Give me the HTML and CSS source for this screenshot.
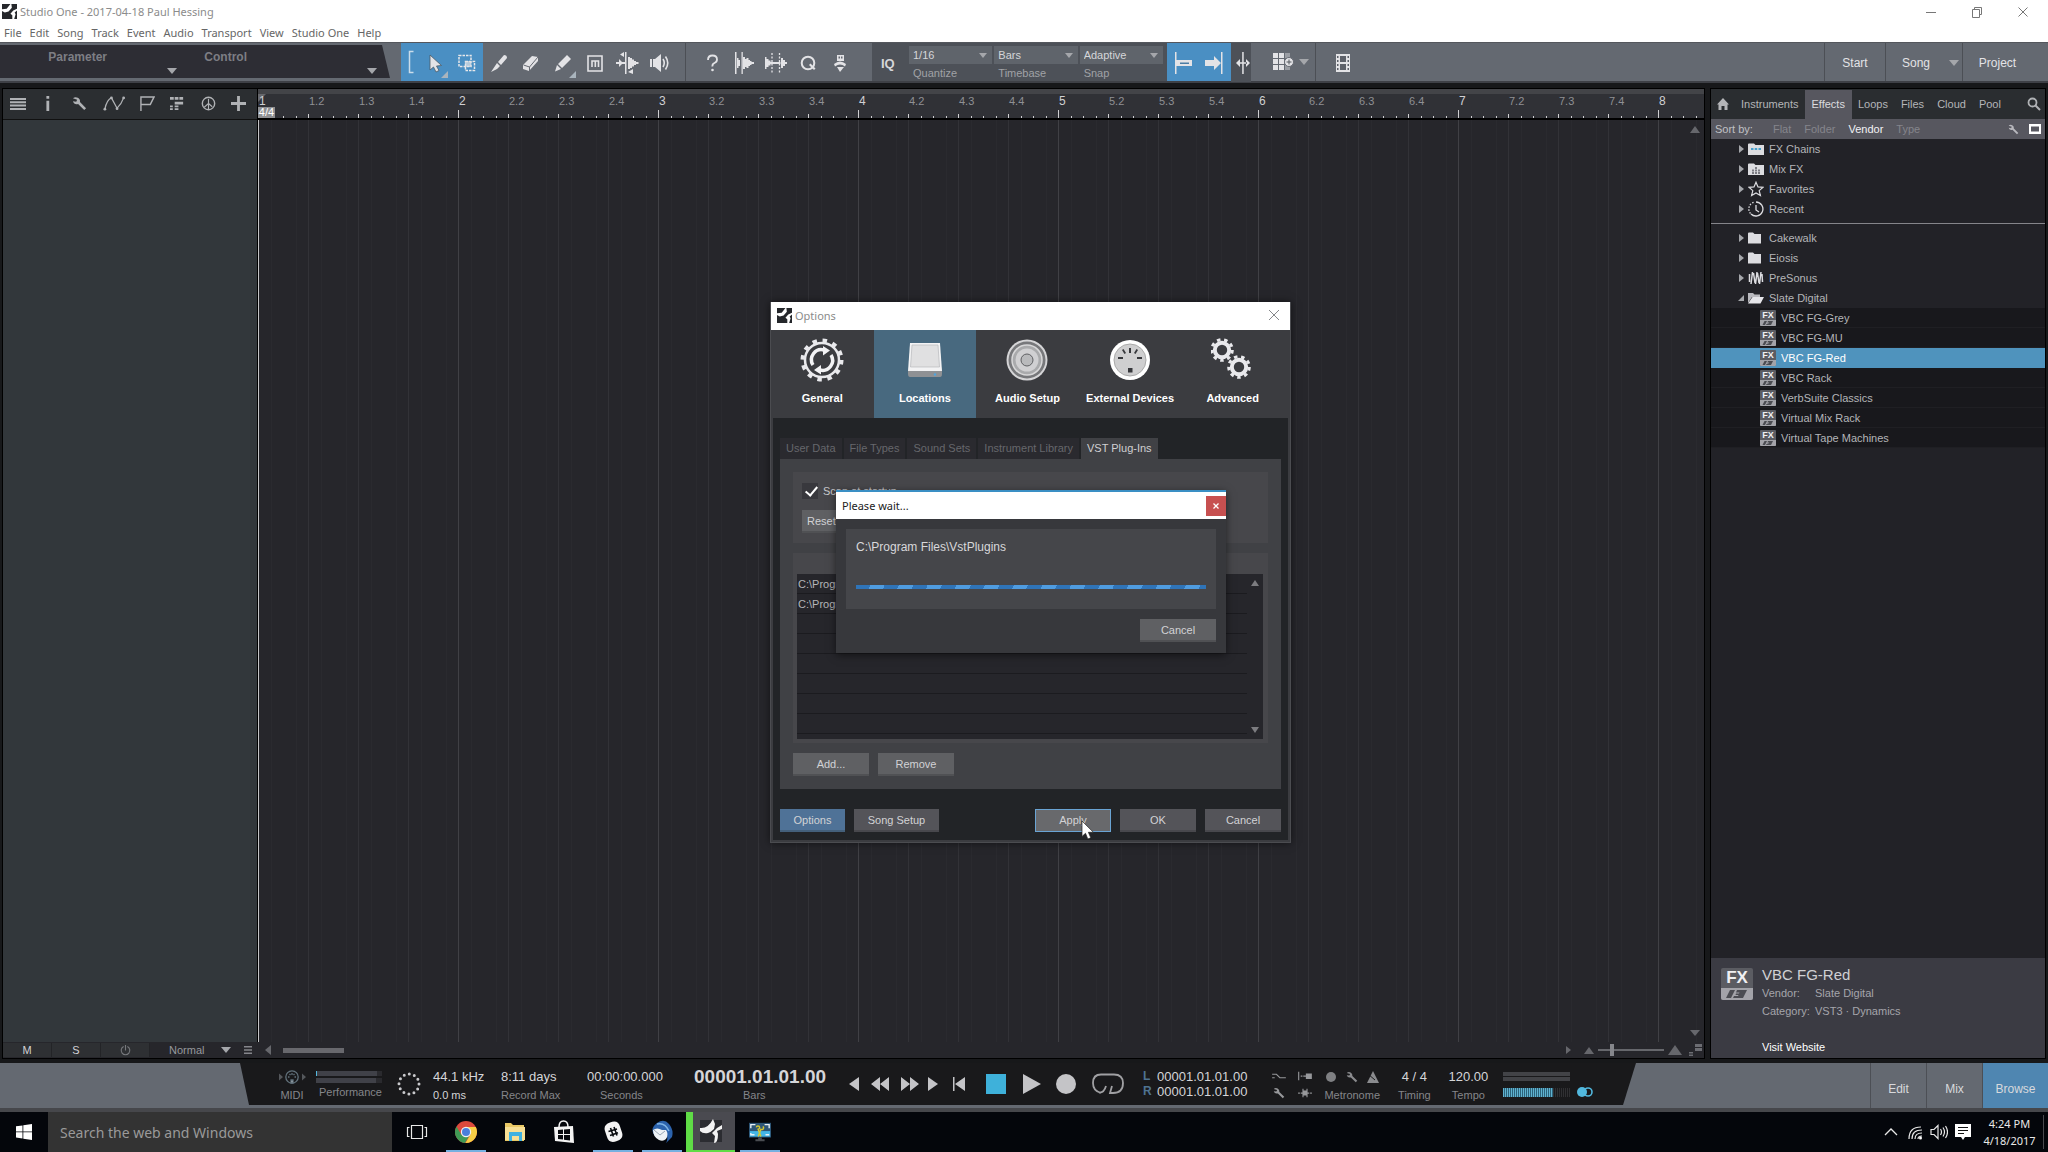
FILE: index.html
```html
<!DOCTYPE html>
<html lang="en">

<head>
    <meta charset="UTF-8">
    <meta name="viewport" content="width=device-width, initial-scale=1.0">
    <title>Studio One - 2017-04-18 Paul Hessing</title>
    <link rel="stylesheet" href="styles.css">
</head>

<body>
    <!-- shared icons -->
    <svg class="defs" aria-hidden="true">
        <symbol id="logo" viewBox="0 0 16 16">
            <rect width="16" height="16" fill="#25272b" />
            <path d="M0 5.500L5 5L9 0H10L10.500 4L7 8L3 9L0 7.500z M16 5L12 7L9 10.500L11 12V16H13L14.500 11L13.500 9L16 7z" fill="#fff" />
        </symbol>
        <symbol id="wrench" viewBox="0 0 16 16">
            <path d="M1 2.500A4.500 4.500 0 0 1 8.500 6.500L15 13L13 15L6.500 8.500A4.500 4.500 0 0 1 1 5.500L4.500 6L5.500 4z" fill="currentColor" />
        </symbol>
        <symbol id="folder" viewBox="0 0 16 12">
            <path d="M0 1.500Q0 .5 1 .5H5L6.500 2H13V11.500H0z" fill="#dcdce0" />
        </symbol>
        <symbol id="plate" viewBox="0 0 32 32">
            <rect width="32" height="32" rx="2" fill="#5b5c62" />
            <path d="M0 20h32v10q0 2-2 2H2q-2 0-2-2z" fill="#a3a3a9" />
            <path d="M9 22h5l-4 8H5z M16 22h10l-4 8H12l1-2h4l.5-1h-3l.5-1.500h3l.5-1H15z" fill="#4b4c52" />
        </symbol>
    </svg>

    <header class="window-head">
        <div class="titlebar">
            <svg class="app-logo"><use href="#logo" /></svg>
            <span>Studio One - 2017-04-18 Paul Hessing</span>
            <div class="win-btns">
                <button type="button" aria-label="Minimize"><svg width="12" height="12"><path d="M1 6.500h10" /></svg></button>
                <button type="button" aria-label="Restore"><svg width="12" height="12"><path d="M1.500 3.500h7v8h-7z M3.500 3v-1.500h7v7h-1.500" /></svg></button>
                <button type="button" aria-label="Close"><svg width="12" height="12"><path d="M1.500 1.500l9 9M10.500 1.500l-9 9" /></svg></button>
            </div>
        </div>
        <nav class="menu">
            <a href="#">File</a><a href="#">Edit</a><a href="#">Song</a><a href="#">Track</a><a href="#">Event</a><a href="#">Audio</a><a href="#">Transport</a><a href="#">View</a><a href="#">Studio One</a><a href="#">Help</a>
        </nav>
    </header>

    <div class="toolbar">
        <div class="param-box">
            <div class="param"><b>Parameter</b><i class="tri"></i></div>
            <div class="param"><b>Control</b><i class="tri"></i></div>
        </div>
        <div class="tools">
            <div class="tool-on">
                <svg class="bracket" viewBox="0 0 6 24"><path d="M5.500 1.500h-4v21h4" fill="none" stroke="#c9dcea" stroke-width="1.500" /></svg>
                <button type="button" class="tool has-more" aria-label="Arrow"><svg viewBox="0 0 24 24"><path d="M7 4v15l3.500-3 2.500 5 3-1.500-2.500-4.500 5-.5z" stroke="#4d5a66" stroke-width=".8" /></svg></button>
                <button type="button" class="tool" aria-label="Range"><svg viewBox="0 0 24 24"><path d="M4 4.500h12v11h-12z M10.500 10.500h9v9h-9z" fill="none" stroke="#e8e8ea" stroke-width="1.500" stroke-dasharray="2.500 1" /><path d="M10 10h6v6h-6z" opacity=".7" /></svg></button>
            </div>
            <button type="button" class="tool" aria-label="Split"><svg viewBox="0 0 24 24"><path d="M17 4q3 0 3 3l-6 7-3-3z M10 12l3 3-3 3-6 3z" /></svg></button>
            <button type="button" class="tool" aria-label="Eraser"><svg viewBox="0 0 24 24"><path d="M4 14l9-9 6 1v4l-9 10-6-2z" /><path d="M4.500 14l6 2 8.500-10M10.500 16v4" fill="none" stroke="#666a72" /></svg></button>
            <button type="button" class="tool has-more" aria-label="Paint"><svg viewBox="0 0 24 24"><path d="M16 4l4 4-9 9-4-4z M6 14l4 4-6 2.500z" /></svg></button>
            <button type="button" class="tool" aria-label="Mute"><svg viewBox="0 0 24 24"><path d="M5 5h14v15H5z M9 16v-6h6.500v6M12.300 10v6" fill="none" stroke="#e3e3e6" stroke-width="1.600" /></svg></button>
            <button type="button" class="tool" aria-label="Bend"><svg viewBox="0 0 24 24"><path d="M10 1h1.500v22H10z M1 11h9v2H1z M4 8l4 4-4 4z M5 3.500L9 1v5z M13 21l5-3v5z M13 6h2v12h-2z M15 7h2v10h-2z M17 8.500h2v7h-2z M19 10h2v4h-2z M21 11h2.500v2H21z" /></svg></button>
            <button type="button" class="tool" aria-label="Listen"><svg viewBox="0 0 24 24"><path d="M3 8h2v8H3z M6 8h2l6-5v18l-6-5H6z" /><path d="M16 8q2.500 4 0 8M18.500 5.500q4.500 6.500 0 13" fill="none" stroke="#e3e3e6" stroke-width="1.600" /></svg></button>
        </div>
        <div class="tools tools-2">
            <button type="button" class="tool" aria-label="Help"><svg viewBox="0 0 24 24"><path d="M8 9q0-4.500 4.500-4.500t4.500 4q0 2.500-2.500 3.500t-2 3.500" fill="none" stroke="#e3e3e6" stroke-width="1.800" /><circle cx="12.500" cy="19" r="1.300" /></svg></button>
            <button type="button" class="tool" aria-label="Strip silence"><svg viewBox="0 0 24 24"><path d="M3 1h1.500v22H3z M9.500 1h1.300v22H9.500z M5 7h1.500v10H5z M6.500 9h1.500v6H6.500z M11 6h2v12h-2z M13 8h1.500v8H13z M14.500 7h2v10h-2z M16.500 9h1.500v6h-1.500z M18 10h1.500v4H18z M19.500 11h2.500v2h-2.500z" /></svg></button>
            <button type="button" class="tool" aria-label="Audio bend"><svg viewBox="0 0 24 24"><path d="M1 6h1.500v12H1z M2.500 8h2v8h-2z M4.500 9.500h2v5h-2z M6.500 11h10v2h-10z M17 7h2v10h-2z M19 9h2v6h-2z M21 11h2v2h-2z" /><path d="M8 2v20M15.500 2v20" stroke="#e3e3e6" stroke-width="1.300" stroke-dasharray="2 1.500" /></svg></button>
            <button type="button" class="tool" aria-label="Quantize"><svg viewBox="0 0 24 24"><circle cx="12" cy="12" r="6.300" fill="none" stroke="#e3e3e6" stroke-width="2" /><path d="M13 14l1.500-1.500 5 5-1.500 1.500z" /></svg></button>
            <button type="button" class="tool" aria-label="Macro"><svg viewBox="0 0 24 24"><path d="M9 4h7v6H9z M6 13q6-5 12 0l-1 2.500q-5-4-10 0z M9 16h7l-4 5z" /><path d="M10.500 5.500h1.500v2h-1.500z M13 5.500h1.500v2H13z" fill="#666a72" /></svg></button>
        </div>
        <div class="snap-bar">
            <b class="iq">IQ</b>
            <div class="pick"><span class="pick-box"><select id="quant"><option>1/16</option></select></span><label for="quant">Quantize</label></div>
            <div class="pick"><span class="pick-box"><select id="timebase"><option>Bars</option></select></span><label for="timebase">Timebase</label></div>
            <div class="pick"><span class="pick-box"><select id="snap"><option>Adaptive</option></select></span><label for="snap">Snap</label></div>
        </div>
        <div class="tool-on follow">
            <button type="button" class="tool" aria-label="Snap to grid"><svg viewBox="0 0 24 24"><path d="M4 1h1.500v22H4z M5 9h16v6H5z" /><path d="M9 11.500h9v1.500H9z" fill="#4a7ca4" /></svg></button>
            <button type="button" class="tool" aria-label="Autoscroll"><svg viewBox="0 0 24 24"><path d="M2 9h9V5l7 7-7 7v-4H2z M18 1h1.500v22H18z" /></svg></button>
        </div>
        <button type="button" class="tool cursor-lock" aria-label="Cursor follows"><svg viewBox="0 0 24 24"><path d="M11.200 1h1.500v22h-1.500z M9 8v8l-4-4z M15 8v8l4-4z M8 11.300h8v1.500H8z" /></svg></button>
        <div class="grid-tool">
            <button type="button" class="tool" aria-label="Grid"><svg viewBox="0 0 24 24"><path d="M2 3h5v5H2z M8 3h5v5H8z M2 9h5v5H2z M8 9h5v5H8z M2 15h5v5H2z M8 15h5v5H8z" /><path d="M14 3h5v5h-5z M14 15h5v5h-5z" fill="#9a9da3" /><circle cx="18" cy="12" r="4.500" stroke="#666a72" /><path d="M18 9.500v5M15.500 12h5" stroke="#55585f" /></svg></button>
            <i class="tri"></i>
        </div>
        <button type="button" class="tool film" aria-label="Video"><svg viewBox="0 0 24 24"><path d="M5 3h14v18H5z" /><path d="M9 5h6v6H9z M9 13h6v6H9z M6 5h1.500v2H6z M6 9h1.500v2H6z M6 13h1.500v2H6z M6 17h1.500v2H6z M16.500 5H18v2h-1.500z M16.500 9H18v2h-1.500z M16.500 13H18v2h-1.500z M16.500 17H18v2h-1.500z" fill="#5d6169" /></svg></button>
        <div class="pages">
            <button type="button">Start</button>
            <button type="button" class="song">Song</button>
            <button type="button" class="more" aria-label="Open songs"><i class="tri"></i></button>
            <button type="button" class="project">Project</button>
        </div>
    </div>

    <main class="workspace">
        <section class="arrange">
            <div class="arrange-top">
                <div class="tracks">
                    <div class="track-tools">
                        <svg viewBox="0 0 16 12"><path d="M0 0h16v2H0z M0 3.300h16v2H0z M0 6.600h16v2H0z M0 9.900h16v2H0z" /></svg>
                        <svg viewBox="0 0 6 16"><path d="M1.500 0h3v3h-3z M1.500 5h3v11h-3z" /></svg>
                        <svg viewBox="0 0 16 16"><use href="#wrench" /></svg>
                        <svg viewBox="0 0 24 16"><path d="M2 14Q4 4 9 2L15 13Q20 8 22 2" fill="none" stroke="#b0b2b5" stroke-width="1.300" /><circle cx="2" cy="14" r="1.500" /><circle cx="9" cy="2" r="1.500" /><circle cx="15" cy="13.500" r="1.500" /><circle cx="22" cy="2" r="1.500" /></svg>
                        <svg viewBox="0 0 16 16"><path d="M1 16V1h14l-4 8H1" fill="none" stroke="#b0b2b5" stroke-width="1.500" /></svg>
                        <svg viewBox="0 0 16 16"><path d="M0 1h4v3H0z M5 1h4v3H5z M10 1h4v3h-4z M5 6h9v3H5z M0 10h3v2H0z M5 10h4v2H5z M0 13h3v2H0z M5 13h4v2H5z" /></svg>
                        <svg viewBox="0 0 16 16"><circle cx="8" cy="8" r="6.600" fill="none" stroke="#b0b2b5" stroke-width="1.500" /><path d="M8 3v5l-4.500 4M8 8l4 3.500M8 8v6" fill="none" stroke="#b0b2b5" stroke-width="1.200" /></svg>
                        <svg viewBox="0 0 16 16"><path d="M6.500 0h3v6.500H16v3H9.500V16h-3V9.500H0v-3h6.500z" /></svg>
                    </div>
                    <div class="track-list"></div>
                </div>
                <div class="timeline">
                    <div class="ruler">
                        <div class="ruler-labels"></div>
                        <span class="sign">4/4</span>
                    </div>
                    <div class="grid">
                        <i class="tri up"></i>
                        <i class="tri"></i>
                    </div>
                </div>
            </div>
            <div class="arrange-foot">
                <button type="button" class="ms">M</button>
                <button type="button" class="ms">S</button>
                <button type="button" class="ms" aria-label="Power"><svg viewBox="0 0 12 12"><path d="M4 1.700a4.700 4.700 0 1 0 4 0M6 0v6" fill="none" stroke="#77797d" stroke-width="1.200" /></svg></button>
                <span class="normal">Normal</span>
                <i class="tri"></i>
                <svg class="lines" viewBox="0 0 8 8"><path d="M0 0h8v1.500H0z M0 3.200h8v1.500H0z M0 6.400h8v1.500H0z" fill="#85868b" /></svg>
                <i class="tri left"></i>
                <span class="hscroll"></span>
                <div class="zoomer">
                    <i class="tri right"></i>
                    <i class="tri up"></i>
                    <input type="range" min="0" max="100" value="20" aria-label="Zoom">
                    <i class="tri up big"></i>
                    <svg class="heights" viewBox="0 0 13 12"><path d="M6 0h7v3H6z M6 4h7v3H6z M0 8h4v1.500H0z M0 10.500h4V12H0z" fill="#6b6c72" /></svg>
                </div>
            </div>
        </section>

        <aside class="browser">
            <nav class="browser-tabs">
                <svg class="home" viewBox="0 0 12 12"><path d="M6 0l6 6.500h-1.500V12h-3V8h-3v4h-3V6.500H0z" /></svg>
                <a href="#">Instruments</a><a href="#" class="active">Effects</a><a href="#">Loops</a><a href="#">Files</a><a href="#">Cloud</a><a href="#">Pool</a>
                <svg class="find" viewBox="0 0 14 14"><circle cx="5.500" cy="5.500" r="4" fill="none" stroke="#b0b2b5" stroke-width="1.800" /><path d="M8.500 8.500l4.500 4.500" stroke="#b0b2b5" stroke-width="2" /></svg>
            </nav>
            <div class="sort">
                <span class="sort-by">Sort by:</span>
                <a href="#">Flat</a><a href="#">Folder</a><a href="#" class="active">Vendor</a><a href="#">Type</a>
                <svg class="sort-wrench" viewBox="0 0 16 16"><use href="#wrench" /></svg>
                <svg class="sort-box" viewBox="0 0 12 12"><path d="M0 1h12v10H0z M2 3.500v5h8v-5z" fill="#fff" fill-rule="evenodd" /></svg>
            </div>
            <ul class="tree">
                <li><i class="tri right"></i><svg viewBox="0 0 16 12"><path d="M0 1.500Q0 .5 1 .5h5l1.500 1.500H16v10H0z" fill="#dcdce0" /><path d="M3 5h2.500v2H3z M6.700 5h2.500v2H6.700z M10.500 5H13v2h-2.500z" fill="#47a0cc" /></svg>FX Chains</li>
                <li><i class="tri right"></i><svg viewBox="0 0 16 12"><path d="M0 1.500Q0 .5 1 .5h5l1.500 1.500H16v10H0z" fill="#dcdce0" /><path d="M7 4h2v2H7z M4 6.500h2v2H4z M7 6.500h2v2H7z M10 6.500h2v2h-2z M4 9h2v2H4z M7 9h2v2H7z M10 9h2v2h-2z" fill="#7d7d84" /></svg>Mix FX</li>
                <li><i class="tri right"></i><svg viewBox="0 0 16 16"><path d="M8 1.200l2 4.700 5 .4-3.800 3.300 1.200 5L8 12l-4.400 2.600 1.200-5L1 6.300l5-.4z" fill="none" stroke="#dcdce0" stroke-width="1.200" /></svg>Favorites</li>
                <li><i class="tri right"></i><svg viewBox="0 0 16 16"><path d="M8 1a7 7 0 1 1-5 12" fill="none" stroke="#dcdce0" stroke-width="1.300" /><path d="M2.500 12.500A7 7 0 0 1 7 1" fill="none" stroke="#dcdce0" stroke-width="1.300" stroke-dasharray="1.500 1.500" /><path d="M8 4v5l3 2" fill="none" stroke="#dcdce0" stroke-width="1.300" /></svg>Recent</li>
            </ul>
            <ul class="tree vendors">
                <li><i class="tri right"></i><svg viewBox="0 0 16 12"><use href="#folder" /></svg>Cakewalk</li>
                <li><i class="tri right"></i><svg viewBox="0 0 16 12"><use href="#folder" /></svg>Eiosis</li>
                <li><i class="tri right"></i><svg viewBox="0 0 16 12"><path d="M1.500 2v8M4.500 0L3 12M5.500 1L7 11M9 0L7.500 12M9.500 1L11 11M13 0l-1.500 12M14 2l.5 8" fill="none" stroke="#dcdce0" stroke-width="1.500" /></svg>PreSonus</li>
                <li><i class="tri open"></i><svg viewBox="0 0 16 12"><path d="M0 11V1h5l1.500 1.500H12V5H4z" fill="#b9b9be" /><path d="M4.500 5H16l-3.500 6.500H0z" fill="#e6e6ea" /></svg>Slate Digital</li>
            </ul>
            <ul class="tree plugins">
                <li><span class="fx"><svg><use href="#plate" /></svg><b>FX</b></span>VBC FG-Grey</li>
                <li><span class="fx"><svg><use href="#plate" /></svg><b>FX</b></span>VBC FG-MU</li>
                <li class="selected"><span class="fx"><svg><use href="#plate" /></svg><b>FX</b></span>VBC FG-Red</li>
                <li><span class="fx"><svg><use href="#plate" /></svg><b>FX</b></span>VBC Rack</li>
                <li><span class="fx"><svg><use href="#plate" /></svg><b>FX</b></span>VerbSuite Classics</li>
                <li><span class="fx"><svg><use href="#plate" /></svg><b>FX</b></span>Virtual Mix Rack</li>
                <li><span class="fx"><svg><use href="#plate" /></svg><b>FX</b></span>Virtual Tape Machines</li>
            </ul>
            <div class="info">
                <span class="fx fx-big"><svg><use href="#plate" /></svg><b>FX</b></span>
                <div class="info-text">
                    <h2>VBC FG-Red</h2>
                    <dl>
                        <dt>Vendor:</dt><dd>Slate Digital</dd>
                        <dt>Category:</dt><dd>VST3 · Dynamics</dd>
                    </dl>
                    <a href="#">Visit Website</a>
                </div>
            </div>
        </aside>
    </main>

    <footer class="transport">
        <div class="deck">
            <div class="cell midi">
                <svg viewBox="0 0 28 14"><path d="M1 3.500l4 3.500-4 3.500z M24 3.500l4 3.500-4 3.500z" fill="#54575b" /><circle cx="14" cy="7" r="6.200" fill="none" stroke="#62727c" stroke-width="1.300" /><path d="M10 7h1.500M16.500 7H18M14 3v2M11.500 4l1 1M16.500 4l-1 1M13 10h2v3h-2z" stroke="#62727c" stroke-width="1.300" /></svg>
                <small>MIDI</small>
            </div>
            <div class="cell perf"><span class="bar cpu"></span><span class="bar"></span><small>Performance</small></div>
            <svg class="busy" viewBox="0 0 24 24"><circle cx="12" cy="12" r="10" /></svg>
            <div class="cell rate"><span>44.1 kHz</span><small class="lit">0.0 ms</small></div>
            <div class="cell recmax"><span>8:11 days</span><small>Record Max</small></div>
            <div class="cell time"><span>00:00:00.000</span><small>Seconds</small></div>
            <div class="cell bars"><b>00001.01.01.00</b><small>Bars</small></div>
            <div class="keys">
                <button type="button" class="k24" aria-label="Previous bar"><svg width="10" height="14"><path d="M10 0v14L0 7z" /></svg></button>
                <button type="button" class="k28" aria-label="Rewind"><svg width="18" height="14"><path d="M9 0v14L0 7z M18 0v14L9 7z" /></svg></button>
                <button type="button" class="k32" aria-label="Forward"><svg width="18" height="14"><path d="M0 0v14l9-7z M9 0v14l9-7z" /></svg></button>
                <button type="button" class="k14" aria-label="Next bar"><svg width="10" height="14"><path d="M0 0v14l10-7z" /></svg></button>
                <button type="button" class="k38" aria-label="Return to zero"><svg width="13" height="14"><path d="M0 0h1.500v14H0z M12 0v14L2 7z" /></svg></button>
                <button type="button" class="k36" aria-label="Stop"><svg width="20" height="20"><path d="M0 0h20v20H0z" fill="#3eb1da" /></svg></button>
                <button type="button" class="k36" aria-label="Play"><svg width="18" height="20"><path d="M0 0v20l18-10z" /></svg></button>
                <button type="button" class="k32" aria-label="Record"><svg width="20" height="20"><circle cx="10" cy="10" r="10" /></svg></button>
                <button type="button" class="k52" aria-label="Loop"><svg width="32" height="22" viewBox="0 0 32 22"><path d="M9 20Q1 18 1 10Q1 1.500 9 1.500H22Q31 1.500 31 10Q31 20 21 20H18L20 13M7 19.500Q12 20 14 13" fill="none" stroke="#a0a0a3" stroke-width="1.800" /></svg></button>
            </div>
            <div class="locators"><i>L</i><span>00001.01.01.00</span><i>R</i><span>00001.01.01.00</span></div>
            <div class="minis">
                <svg viewBox="0 0 16 14"><path d="M0 5h5l4 4h7M0 9h3" fill="none" stroke="#97989b" stroke-width="1.200" /></svg>
                <svg viewBox="0 0 16 14"><path d="M0 2h1.300v10H0z M3 6.500h2v1.500H3z M7 4v6M6 6.500h3V4h7v6.500H9V8H6z" fill="#97989b" /></svg>
                <svg viewBox="0 0 16 16"><use href="#wrench" /></svg>
                <svg viewBox="0 0 16 14"><path d="M0 6.500h2V8H0z M14 6.500h2V8h-2z M3 6.500h2V2h1.300v2h3.400V2H11v4.500h2V8h-2v4H9.700v-2H6.300v2H5V8H3z" fill="#97989b" /></svg>
            </div>
            <div class="cell metro">
                <div class="metro-icons">
                    <svg viewBox="0 0 12 12"><circle cx="6" cy="6" r="5" fill="#7f8083" /></svg>
                    <svg viewBox="0 0 16 16"><use href="#wrench" /></svg>
                    <svg viewBox="0 0 12 12"><path d="M6 0l6 12H0z" fill="#8a8b8e" /><path d="M1 3l7 6" stroke="#1a1a1c" /></svg>
                </div>
                <small>Metronome</small>
            </div>
            <div class="cell timing"><span>4 / 4</span><small>Timing</small></div>
            <div class="cell tempo"><span>120.00</span><small>Tempo</small></div>
            <div class="meters">
                <div class="level-off"><i></i><i></i></div>
                <div class="level"><i></i></div>
            </div>
            <svg class="chan" viewBox="0 0 16 10"><circle cx="5" cy="5" r="5" fill="#52b8de" /><circle cx="11" cy="5" r="4" fill="none" stroke="#52b8de" stroke-width="1.600" /></svg>
        </div>
        <div class="views">
            <button type="button">Edit</button>
            <button type="button">Mix</button>
            <button type="button" class="active">Browse</button>
        </div>
    </footer>

    <div class="taskbar">
        <button type="button" class="start" aria-label="Start"><svg viewBox="0 0 16 16"><path d="M0 2.300l6.500-.9v6.100H0z M7.300 1.300L16 0v7.500H7.300z M0 8.300h6.500v6.200L0 13.600z M7.300 8.300H16V16l-8.700-1.300z" fill="#fff" /></svg></button>
        <input type="text" placeholder="Search the web and Windows" aria-label="Search the web and Windows">
        <button type="button" class="task" aria-label="Task view"><svg viewBox="0 0 22 22"><path d="M5.500 4.500h11v13h-11z M3.500 6.500h-2v9h2M18.500 6.500h2v9h-2" fill="none" stroke="#e8e8e8" stroke-width="1.200" /></svg></button>
        <button type="button" class="task running" aria-label="Chrome"><svg viewBox="0 0 22 22"><circle cx="11" cy="11" r="11" fill="#dc4a3d" /><path d="M1.500 5.500A11 11 0 0 0 10 22l5-8.500-4-2.500-4.500 3z" fill="#3f9a55" /><path d="M11 6h9.800A11 11 0 0 1 10.500 22l5-8.500z" fill="#f8cf45" /><circle cx="11" cy="11" r="5.200" fill="#f1f1f1" /><circle cx="11" cy="11" r="4" fill="#4a7fdc" /></svg></button>
        <button type="button" class="task" aria-label="File Explorer"><svg viewBox="0 0 22 22"><path d="M1 2h6l2 2h11v16H1z" fill="#e9c865" /><path d="M1 6h20v13H1z" fill="#f7df95" /><path d="M5 20v-9h13v9h-3v-5H8v5z" fill="#3fb1e0" /></svg></button>
        <button type="button" class="task" aria-label="Store"><svg viewBox="0 0 22 24"><path d="M1 7l19-1 1 17-19-2z" fill="#f4f4f4" /><path d="M6 7q0-6 4.500-6t4.500 6" fill="none" stroke="#f4f4f4" stroke-width="1.500" /><path d="M5 10l5-.5v4.500H5z M11 9.400l6-.4v5h-6z M5 15h5v4.500L5 19z M11 15h6v5.500l-6-.8z" fill="#07090d" /></svg></button>
        <button type="button" class="task running" aria-label="Slack"><svg viewBox="0 0 22 22"><path d="M8 1.500q8-3 10 4l2 6q2 6-5 8.500-8 3-10-4l-2-6q-2-6 5-8.500z" fill="#f4f4f4" /><path d="M8.500 7l3 8.500M12 6l3 8.500M6.500 10.500L15 8M8 14.500l8-2.700" stroke="#07090d" stroke-width="1.600" /></svg></button>
        <button type="button" class="task running" aria-label="Thunderbird"><svg viewBox="0 0 22 24"><path d="M6 3Q13-2 18 4q5 6 3 13l-6 6q2-3 1-7L4 16Q-2 9 6 3z" fill="#2c63ad" /><path d="M2 10q4-3 9 0l4 0q3 4 0 9-3 3-7 1-6-3-6-10z" fill="#eef2f6" /><path d="M3 10l6 5 5-4" fill="none" stroke="#9aa7b5" /><path d="M6 4q8-2 12 7" fill="none" stroke="#7fb4e6" stroke-width="1.500" /></svg></button>
        <button type="button" class="task current" aria-label="Studio One"><svg viewBox="0 0 22 24"><path d="M0 1h22v22H0z" fill="#2b2c31" /><path d="M0 9q8 1 13-9l2 5-1 5q-3 3-6 4-5 1-8-2z M22 6l-5 3-5 5 3 3-1 7q4 0 4-9l-1-3 5-2z" fill="#f2f2f2" /></svg></button>
        <button type="button" class="task running" aria-label="Snipping"><svg viewBox="0 0 24 22"><path d="M0 1h24v16H0z" fill="#2d5576" /><path d="M1 10h22v6H1z" fill="#43b6e6" /><path d="M2 7V3h5M17 3h5v4M2 12v2h4M18 14h4" fill="none" stroke="#e8f0f4" stroke-width="1.500" /><path d="M8 6a1.800 1.800 0 1 1 2 2l3 8M15 5a1.800 1.800 0 1 1-2 3l-3 8" fill="none" stroke="#d4c62f" stroke-width="1.600" /><path d="M10 17h4v2h3v2H7v-2h3z" fill="#4a4d52" /></svg></button>
        <div class="tray">
            <svg viewBox="0 0 18 18"><path d="M3 12l6-6 6 6" fill="none" stroke="#e8e8e8" stroke-width="1.300" /></svg>
            <svg viewBox="0 0 18 18"><path d="M3 16Q3 4 15 4M6 16q0-9 10-9M9 16q0-6 7-6M12 16q0-3 4-3" fill="none" stroke="#e8e8e8" stroke-width="1.200" /><circle cx="14.500" cy="15" r="1.500" fill="#fff" /></svg>
            <svg viewBox="0 0 18 18"><path d="M1 6.500h3l4-4v13l-4-4H1z M10.500 6q2 3 0 6M13 4.500q3 4.500 0 9M15.500 3q4 6 0 12" fill="none" stroke="#e8e8e8" stroke-width="1.200" /></svg>
            <svg viewBox="0 0 18 18"><path d="M1 1h16v13h-6l-2 3-2-3H1z" fill="#fff" /><path d="M4 4.500h10M4 7.500h10M4 10.500h6" stroke="#111" /></svg>
            <div class="clock">4:24 PM<br>4/18/2017</div>
        </div>
    </div>

    <!-- options window -->
    <div class="options">
        <div class="options-title">
            <svg class="app-logo"><use href="#logo" /></svg>
            <span>Options</span>
            <button type="button" aria-label="Close"><svg width="12" height="12"><path d="M1 1l10 10M11 1L1 11" stroke="#85878a" /></svg></button>
        </div>
        <nav class="options-nav">
            <button type="button">
                <svg viewBox="0 0 44 44"><circle cx="22" cy="22" r="19.500" fill="none" stroke="#e9e9ec" stroke-width="4" stroke-dasharray="4.500 5.710" /><circle cx="22" cy="22" r="17" fill="none" stroke="#e9e9ec" stroke-width="2.500" /><path d="M13 27A10 10 0 0 1 24 12M31 17A10 10 0 0 1 20 32" fill="none" stroke="#f2f2f4" stroke-width="3.500" /><path d="M23 8l7 4.500-7 5z M21 27l-7 5 7 4.500z" fill="#f2f2f4" /></svg>
                General
            </button>
            <button type="button" class="active">
                <svg viewBox="0 0 44 44"><path d="M7 5h30l2 28H5z" fill="#f3f3f4" /><path d="M9 7h26l1.500 22h-29z" fill="#e0e0e1" stroke="#b8b9bb" stroke-width=".7" /><path d="M5 33h34v3q0 3-2 3H7q-2 0-2-3z" fill="#8f9194" /><circle cx="32" cy="36.500" r="1.200" fill="#4ea5e0" /></svg>
                Locations
            </button>
            <button type="button">
                <svg viewBox="0 0 44 44"><circle cx="22" cy="22" r="20.500" fill="#d5d5d7" /><circle cx="22" cy="22" r="18.500" fill="#77787b" /><circle cx="22" cy="22" r="15" fill="#a9aaac" stroke="#d8d8d9" stroke-width="1.500" /><circle cx="22" cy="22" r="11.500" fill="#d0d0d2" /><circle cx="22" cy="22" r="6" fill="#b9babc" stroke="#5f6063" /></svg>
                Audio Setup
            </button>
            <button type="button">
                <svg viewBox="0 0 44 44"><circle cx="22" cy="22" r="20" fill="#fff" /><circle cx="22" cy="22" r="16" fill="#cfcfd0" stroke="#aaa" /><path d="M21 10h2v5h-2z M14 12l1.500-1 2.500 4-1.500 1z M28.500 11l1.500 1-2.500 4-1.500-1z M10 19h5v2h-5z M29 19h5v2h-5z M20 30h4.500v4.500H20z" fill="#36373b" /></svg>
                External Devices
            </button>
            <button type="button">
                <svg viewBox="0 0 44 44"><g fill="none" stroke="#e9e9ec"><circle cx="11" cy="12" r="7.200" stroke-width="4" /><circle cx="11" cy="12" r="10.300" stroke-width="3" stroke-dasharray="3.500 3.692" /><circle cx="28" cy="29" r="7.200" stroke-width="4" /><circle cx="28" cy="29" r="10.300" stroke-width="3" stroke-dasharray="3.500 3.692" /></g></svg>
                Advanced
            </button>
        </nav>
        <div class="options-body">
            <div class="tabs">
                <a href="#">User Data</a><a href="#">File Types</a><a href="#">Sound Sets</a><a href="#">Instrument Library</a><a href="#" class="active">VST Plug-Ins</a>
            </div>
            <div class="panel">
                <div class="group">
                    <label class="check"><input type="checkbox" checked>Scan at startup</label>
                    <button type="button" class="btn reset">Reset</button>
                </div>
                <div class="group paths">
                    <ul>
                        <li>C:\Program Files\VstPlugins</li>
                        <li>C:\Program Files\Steinberg</li>
                        <li></li><li></li><li></li><li></li><li></li><li></li>
                    </ul>
                    <div class="path-scroll"><i class="tri up"></i><i class="tri"></i></div>
                </div>
                <div class="row">
                    <button type="button" class="btn">Add...</button>
                    <button type="button" class="btn">Remove</button>
                </div>
            </div>
            <div class="row actions">
                <button type="button" class="btn cool blue">Options</button>
                <button type="button" class="btn cool setup">Song Setup</button>
                <button type="button" class="btn cool apply">Apply</button>
                <button type="button" class="btn cool">OK</button>
                <button type="button" class="btn cool">Cancel</button>
            </div>
        </div>
    </div>

    <!-- scan progress -->
    <div class="wait">
        <div class="wait-title">
            <span>Please wait...</span>
            <button type="button" aria-label="Close"><svg width="8" height="8"><path d="M1.500 1.500l5 5M6.500 1.500l-5 5" stroke="#fff" stroke-width="1.300" /></svg></button>
        </div>
        <div class="wait-body">
            <div class="wait-box">
                <p>C:\Program Files\VstPlugins</p>
                <div class="progress" role="progressbar" aria-label="Scanning"></div>
            </div>
            <button type="button" class="btn">Cancel</button>
        </div>
    </div>

    <svg class="pointer" viewBox="0 0 14 20"><path d="M1 1v15.500l3.500-3.200 2.300 5.700 3-1.200-2.400-5.500h5z" fill="#fff" stroke="#222" stroke-width=".7" /></svg>

    <script>
        // bar and beat numbers, four beats to the bar
        var labels = document.querySelector('.ruler-labels');
        for (var bar = 1; bar <= 8; bar++) {
            for (var beat = 1; beat <= 4; beat++) {
                if (bar === 8 && beat > 1) break;
                var span = document.createElement('span');
                span.textContent = beat === 1 ? bar : bar + '.' + beat;
                if (beat === 1) span.className = 'bar-no';
                labels.appendChild(span);
            }
        }
    </script>
</body>

</html>
```
FILE: styles.css
```css
* {
    box-sizing: border-box;
    margin: 0;
    padding: 0;
}

body {
    display: flex;
    flex-direction: column;
    height: 100vh;
    overflow: hidden;
    background: #17181a;
    color: #b4b5b8;
    font-family: "Liberation Sans", Arial, sans-serif;
    font-size: 11px;
}

a {
    color: inherit;
    text-decoration: none;
}

ul {
    list-style: none;
}

button,
input,
select {
    border: 0;
    background: none;
    color: inherit;
    font: inherit;
}

svg {
    display: block;
    flex-shrink: 0;
    fill: currentColor;
}

.defs {
    position: absolute;
    width: 0;
    height: 0;
}

/* plug-in badge */
.fx {
    position: relative;
    width: 16px;
    height: 16px;
    margin-right: 5px;
    flex-shrink: 0;
    color: #f0f0f2;
    font-size: 9px;
    line-height: 10px;
    text-align: center;
}

.fx svg {
    width: 100%;
    height: 100%;
}

.fx b {
    position: absolute;
    top: 0;
    right: 0;
    left: 0;
}

.fx-big {
    width: 32px;
    height: 32px;
    margin: 2px 0 0;
    font-size: 17px;
    line-height: 20px;
}

/* triangles */
.tri {
    width: 0;
    height: 0;
    flex-shrink: 0;
    border: 5px solid transparent;
    border-top: 6px solid #a5a7ab;
    border-bottom: 0;
}

.tri.up {
    border-top: 0;
    border-bottom: 7px solid #66676c;
}

.tri.right {
    border: 4px solid transparent;
    border-left: 5px solid #a5a7ab;
    border-right: 0;
}

.tri.left {
    border: 5px solid transparent;
    border-right: 6px solid #66676c;
    border-left: 0;
}

.tri.open {
    border: 0;
    border-left: 6px solid transparent;
    border-bottom: 6px solid #a5a7ab;
}

/* window head */
.window-head {
    height: 42px;
    background: #fff;
    font-family: "Noto Sans", sans-serif;
    font-size: 11px;
}

.titlebar {
    display: flex;
    align-items: center;
    height: 23px;
    padding-left: 2px;
    color: #8b8b8b;
}

.app-logo {
    width: 15px;
    height: 15px;
    margin-right: 3px;
}

.win-btns {
    display: flex;
    margin-left: auto;
    padding-right: 2px;
}

.win-btns button {
    display: grid;
    place-items: center;
    width: 46px;
    height: 21px;
}

.win-btns svg {
    fill: none;
    stroke: #777;
}

.menu {
    display: flex;
    gap: 8px;
    padding-left: 4px;
    color: #666;
    line-height: 19px;
}

/* toolbar */
.toolbar {
    display: flex;
    height: 41px;
    border-top: 1px solid #54575d;
    border-bottom: 2px solid #3e4046;
    background: #646971;
    color: #e3e3e6;
}

.param-box {
    display: flex;
    width: 390px;
    height: 33px;
    margin: 2px 11px 0 0;
    background: #2d2d34;
    clip-path: polygon(0 0, 382px 0, 100% 100%, 0 100%);
    color: #7d7e84;
    font-size: 12px;
}

.param {
    display: flex;
    justify-content: flex-end;
    gap: 60px;
    width: 177px;
    padding-top: 5px;
}

.param:last-child {
    gap: 120px;
    width: 200px;
}

.param .tri {
    margin-top: 18px;
}

.tools {
    display: flex;
    padding-right: 10px;
    border-right: 1px solid #4c4f55;
}

.tools-2 {
    padding: 0 16px 0 10px;
    border: 0;
}

.tool-on {
    display: flex;
    background: #4a8fc3;
}

.bracket {
    align-self: center;
    width: 6px;
    height: 24px;
    margin: 0 5px 0 7px;
}

.tool {
    position: relative;
    display: grid;
    place-items: center;
    width: 32px;
    height: 39px;
}

.tool svg {
    width: 24px;
    height: 24px;
    color: #e3e3e6;
}

.has-more::after {
    content: "";
    position: absolute;
    right: 3px;
    bottom: 4px;
    border-left: 7px solid transparent;
    border-bottom: 7px solid #a9b4bd;
}

.snap-bar {
    display: flex;
    gap: 2px;
    width: 295px;
    padding: 3px 4px 0 9px;
    background: #4d5158;
    color: #d5d6d9;
}

.iq {
    width: 26px;
    padding-top: 10px;
    font-size: 13px;
}

.pick {
    flex: 1;
}

.pick-box {
    position: relative;
    display: block;
    background: #5f646b;
}

.pick-box::after {
    content: "";
    position: absolute;
    top: 7px;
    right: 5px;
    border: 4px solid transparent;
    border-top: 5px solid #a5a7ab;
    border-bottom: 0;
}

.pick select {
    width: 100%;
    height: 18px;
    padding-left: 4px;
    appearance: none;
}

.pick label {
    display: block;
    padding-left: 4px;
    color: #a0a2a6;
    line-height: 18px;
}

.follow {
    width: 64px;
}

.cursor-lock {
    width: 20px;
    background: #4d5158;
}

.grid-tool {
    display: flex;
    align-items: center;
    width: 65px;
    padding-left: 16px;
    border-right: 1px solid #4c4f55;
}

.film {
    width: 54px;
}

.pages {
    display: flex;
    margin-left: auto;
    font-size: 12px;
}

.pages button {
    width: 61px;
    padding-top: 2px;
    border-left: 1px solid #4c4f55;
}

.pages .more {
    display: grid;
    place-items: center;
    width: 16px;
    border: 0;
}

.pages .project {
    width: 86px;
    padding-right: 16px;
}

/* workspace */
.workspace {
    display: flex;
    flex: 1;
    gap: 5px;
    min-height: 0;
    padding: 5px 2px 4px;
}

.arrange {
    display: flex;
    flex: 1;
    flex-direction: column;
    min-width: 0;
    border: 1px solid #000;
    background: #26262b;
}

.arrange-top {
    display: flex;
    flex: 1;
    min-height: 0;
}

.tracks {
    display: flex;
    flex-direction: column;
    width: 255px;
    border-right: 1px solid #000;
}

.track-tools {
    display: grid;
    grid-template-columns: 30px 30px 32px 38px 28px 32px 30px 30px;
    place-items: center;
    height: 31px;
    padding-bottom: 1px;
    border-bottom: 1px solid #111;
    background: #2b2e31;
    color: #b0b2b5;
}

.track-tools svg {
    max-width: 24px;
    height: 15px;
}

.track-tools svg:first-child {
    height: 12px;
}

.track-list {
    flex: 1;
    background: #32373b;
}

.timeline {
    display: flex;
    flex: 1;
    flex-direction: column;
    min-width: 0;
}

.ruler {
    position: relative;
    height: 31px;
    border-top: 5px solid #434448;
    border-bottom: 2px solid #000;
    overflow: hidden;
    background:
        repeating-linear-gradient(90deg, #d0d0d2 0 1px, transparent 1px 200px) 0 100% / 100% 8px no-repeat,
        repeating-linear-gradient(90deg, #d0d0d2 0 1px, transparent 1px 50px) 0 100% / 100% 4px no-repeat,
        repeating-linear-gradient(90deg, #d0d0d2 0 1px, transparent 1px 25px) 0 100% / 100% 2px no-repeat,
        repeating-linear-gradient(90deg, transparent 0 13px, #d0d0d2 13px 14px, transparent 14px 25px) 0 100% / 100% 2px no-repeat,
        #303136;
}

/* song start flag */
.ruler::before {
    content: "";
    position: absolute;
    top: 0;
    left: 0;
    border-top: 8px solid #66676b;
    border-right: 8px solid transparent;
}

.ruler-labels {
    position: relative;
    display: flex;
    line-height: 15px;
    color: #8f9094;
}

.ruler-labels span {
    width: 50px;
    flex-shrink: 0;
    padding-left: 1px;
}

.ruler-labels .bar-no {
    color: #d0d0d3;
    font-size: 12px;
}

.sign {
    position: absolute;
    bottom: 0;
    left: 0;
    width: 17px;
    background: #8f9093;
    color: #fff;
    font-size: 11px;
    line-height: 11px;
    text-align: center;
}

.grid {
    display: flex;
    flex: 1;
    flex-direction: column;
    justify-content: space-between;
    align-items: flex-end;
    padding: 6px 4px;
    border-left: 1px solid #c5c5c8;
    background:
        repeating-linear-gradient(90deg, transparent 0 199px, #404045 199px 200px),
        repeating-linear-gradient(90deg, transparent 0 49px, #323237 49px 50px),
        repeating-linear-gradient(90deg, transparent 0 12px, #2a2a2f 12px 13px, transparent 13px 25px),
        #26262b;
}

.grid .tri {
    border-top-color: #66676c;
}

.arrange-foot {
    display: flex;
    align-items: center;
    height: 16px;
    color: #97989c;
}

.ms {
    display: grid;
    place-items: center;
    width: 49px;
    height: 14px;
    border-right: 1px solid #232427;
    background: #2e3033;
    color: #d2d2d5;
}

.ms svg {
    width: 11px;
    height: 11px;
}

.normal {
    width: 71px;
    padding-left: 19px;
}

.lines {
    width: 8px;
    height: 8px;
    margin: 0 13px;
}

.hscroll {
    width: 61px;
    height: 5px;
    margin-left: 12px;
    background: #68686d;
}

.zoomer {
    display: flex;
    align-items: center;
    gap: 4px;
    margin-left: auto;
    padding-right: 2px;
}

.zoomer .right {
    margin-right: 9px;
    border-left-color: #66676c;
}

.zoomer input {
    width: 66px;
    height: 12px;
    appearance: none;
    background: linear-gradient(#66676c, #66676c) center / 100% 2px no-repeat;
}

.zoomer input::-webkit-slider-thumb {
    appearance: none;
    width: 4px;
    height: 12px;
    background: #85868b;
}

.zoomer .big {
    border-width: 0 7px 10px;
}

.heights {
    width: 13px;
    height: 12px;
    margin-left: 3px;
}

/* browser */
.browser {
    display: flex;
    flex-direction: column;
    width: 336px;
    border: 1px solid #000;
    background: #222227;
}

.browser-tabs {
    display: flex;
    align-items: center;
    height: 30px;
    padding: 0 4px 0 6px;
    background: #2a2d30;
    line-height: 29px;
}

.browser-tabs a {
    padding: 0 7px 0 6px;
}

.browser-tabs .active {
    background: #57575f;
    color: #dcdcdf;
}

.home {
    width: 12px;
    height: 12px;
    margin-right: 6px;
}

.find {
    width: 14px;
    height: 14px;
    margin-left: auto;
}

.sort {
    display: flex;
    align-items: center;
    gap: 13px;
    height: 20px;
    padding: 0 4px;
    background: #57575f;
    color: #85858c;
}

.sort-by {
    margin-right: 7px;
    color: #c0c0c4;
}

.sort .active {
    color: #f2f2f4;
}

.sort-wrench {
    width: 11px;
    height: 11px;
    margin-left: auto;
    color: #b9b9be;
}

.sort-box {
    width: 12px;
    height: 12px;
    margin-left: -3px;
}

.tree {
    padding-bottom: 4px;
}

.tree li {
    display: flex;
    align-items: center;
    height: 20px;
    padding-left: 28px;
}

.tree .tri.right {
    margin-right: 4px;
}

.tree .open {
    margin: 0 4px 0 -1px;
}

.tree li > svg {
    width: 16px;
    height: 16px;
    margin-right: 5px;
}

.vendors {
    padding: 4px 0 0;
    border-top: 1px solid #85858a;
}

.plugins li {
    padding-left: 49px;
    border-bottom: 1px solid #1f1f23;
    background: #18181c;
}

.plugins .selected {
    border-color: #4f93bd;
    background: #4f93bd;
    color: #fff;
}

.info {
    display: flex;
    gap: 9px;
    height: 100px;
    margin-top: auto;
    padding: 8px 10px 0;
    background: #3b3b43;
}

.info h2 {
    color: #d0d0d4;
    font-size: 15px;
    font-weight: normal;
    line-height: 18px;
}

.info dl {
    display: grid;
    grid-template-columns: 53px auto;
    margin-bottom: 21px;
    color: #a5a5ab;
    line-height: 18px;
}

.info a {
    color: #fff;
}

/* transport */
.transport {
    display: flex;
    align-items: flex-start;
    height: 49px;
    padding-left: 240px;
    border-bottom: 4px solid #46474b;
    background: #646971;
}

.deck {
    display: flex;
    align-items: center;
    width: 1396px;
    height: 42px;
    padding-left: 38px;
    background: #19191b;
    clip-path: polygon(0 0, 100% 0, 1383px 100%, 9px 100%);
    color: #d5d5d8;
    font-size: 13px;
}

.cell {
    display: flex;
    flex-direction: column;
    height: 38px;
    line-height: 24px;
}

.cell small {
    color: #85868a;
    font-size: 11px;
    line-height: 13px;
}

.cell .lit {
    color: #d5d5d8;
}

.midi {
    align-items: center;
    width: 28px;
    margin-right: 10px;
}

.midi svg {
    width: 28px;
    height: 14px;
    margin: 5px 0;
}

.perf {
    gap: 2px;
    width: 66px;
    margin-right: 15px;
    padding-top: 6px;
}

.bar {
    height: 5px;
    background: linear-gradient(90deg, #404148 60px, #2a2a2e 60px);
}

.cpu {
    border-left: 1px solid #52b8de;
}

.perf small {
    padding: 1px 0 0 3px;
}

.busy {
    width: 24px;
    height: 24px;
    margin-right: 12px;
    fill: none;
    stroke: #c9c9cc;
    stroke-width: 3;
    stroke-linecap: round;
    stroke-dasharray: 0 5.236;
}

.rate {
    width: 68px;
}

.recmax {
    width: 86px;
}

.time {
    width: 107px;
}

.time small {
    padding-left: 13px;
}

.bars {
    width: 148px;
}

.bars b {
    font-size: 19px;
}

.bars small {
    padding-left: 49px;
}

.keys {
    display: flex;
    color: #c4c4c7;
}

.keys button {
    display: grid;
    place-items: center;
    height: 38px;
}

.k14 {
    width: 14px;
}

.k24 {
    width: 24px;
}

.k28 {
    width: 28px;
}

.k32 {
    width: 32px;
}

.k36 {
    width: 36px;
}

.k38 {
    width: 38px;
}

.k52 {
    width: 52px;
}

.locators {
    display: grid;
    grid-template-columns: 14px auto;
    margin: 0 24px 0 9px;
    line-height: 15px;
}

.locators i {
    color: #4f7391;
    font-size: 12px;
    font-style: normal;
    font-weight: bold;
}

.minis {
    display: grid;
    grid-template-columns: 16px 16px;
    gap: 5px 10px;
    margin-right: 11px;
    color: #97989b;
}

.minis svg {
    width: 16px;
    height: 12px;
}

.metro {
    width: 74px;
}

.metro-icons {
    display: flex;
    align-items: center;
    gap: 9px;
    height: 24px;
    padding-left: 1px;
    color: #8a8b8e;
}

.metro-icons svg {
    width: 12px;
    height: 12px;
}

.timing {
    align-items: center;
    width: 32px;
    margin-right: 18px;
}

.tempo {
    align-items: center;
    width: 40px;
    margin-right: 15px;
}

.meters {
    width: 67px;
    margin-right: 7px;
}

.level-off i {
    display: block;
    height: 4px;
    margin-bottom: 1px;
    background: #424347;
}

.level {
    height: 9px;
    margin-top: 7px;
    background: repeating-linear-gradient(90deg, #303033 0 1px, #19191b 1px 2px);
}

.level i {
    display: block;
    width: 50px;
    height: 9px;
    background: repeating-linear-gradient(90deg, #5fb2d0 0 1px, #2d6279 1px 2px);
}

.chan {
    width: 16px;
    height: 10px;
    margin-top: 16px;
}

.views {
    display: flex;
    margin-left: auto;
    color: #d8d9dc;
    font-size: 12px;
}

.views button {
    width: 56px;
    height: 45px;
    padding-top: 6px;
    border-left: 1px solid #4c4f55;
}

.views .active {
    width: 66px;
    background: #4f86b1;
}

/* windows taskbar */
.taskbar {
    display: flex;
    height: 40px;
    background: #04060b;
    font-family: "Noto Sans", sans-serif;
}

.start {
    display: grid;
    place-items: center;
    width: 48px;
}

.start svg {
    width: 16px;
    height: 16px;
}

.taskbar input {
    width: 344px;
    padding: 0 12px;
    background: #333;
    font-size: 14px;
}

.taskbar input::placeholder {
    color: #9a9a9a;
    opacity: 1;
}

.task {
    position: relative;
    display: grid;
    place-items: center;
    width: 49px;
}

.task svg {
    width: 22px;
    height: 24px;
}

.running::after {
    content: "";
    position: absolute;
    right: 4px;
    bottom: 0;
    left: 5px;
    height: 2px;
    background: #76b0e0;
}

.current {
    padding-right: 6px;
    border-bottom: 2px solid #5fdc46;
    border-left: 7px solid #5fdc46;
    background: #4a4a50;
}

.tray {
    display: flex;
    align-items: center;
    gap: 6px;
    margin-left: auto;
    padding-right: 4px;
}

.tray svg {
    width: 18px;
    height: 18px;
}

.clock {
    width: 66px;
    padding-right: 2px;
    border-right: 1px solid #4a4a4e;
    color: #e8e8e8;
    font-size: 11px;
    line-height: 17px;
    text-align: center;
}

/* options window */
.options {
    position: absolute;
    top: 302px;
    left: 770px;
    width: 521px;
    border: 1px solid #4b4c50;
    border-top: 0;
    background: #3b3c40;
    box-shadow: 0 0 8px #0008;
}

.options-title {
    display: flex;
    align-items: center;
    height: 28px;
    padding: 0 10px 2px 6px;
    background: #fff;
    color: #8b8b8b;
    font-family: "Noto Sans", sans-serif;
    font-size: 11px;
}

.options-title button {
    margin-left: auto;
}

.options-nav {
    display: flex;
    height: 88px;
    padding-right: 6px;
    color: #fff;
    font-weight: bold;
}

.options-nav button {
    display: flex;
    flex: 1;
    flex-direction: column;
    align-items: center;
    gap: 10px;
    padding-top: 8px;
    white-space: nowrap;
}

.options-nav svg {
    width: 44px;
    height: 44px;
}

.options-nav .active {
    background: #48697f;
}

.options-body {
    margin: 0 2px 2px;
    padding: 20px 7px 8px;
    background: #222427;
}

.tabs {
    display: flex;
    gap: 2px;
    line-height: 21px;
    color: #66676c;
}

.tabs a {
    padding: 0 6px;
    background: #2a2a2f;
}

.tabs .active {
    background: #404145;
    color: #d0d0d3;
}

.panel {
    padding: 13px;
    background: #404145;
}

.group {
    height: 71px;
    margin-bottom: 10px;
    padding: 10px 9px;
    background: #47474b;
    color: #c8c8cb;
}

.check {
    display: flex;
    align-items: center;
    gap: 5px;
    height: 18px;
}

.check input {
    position: relative;
    width: 16px;
    height: 16px;
    appearance: none;
    background: #38383d;
}

.check input:checked::after {
    content: "";
    position: absolute;
    top: 1px;
    left: 6px;
    width: 5px;
    height: 10px;
    border: solid #fff;
    border-width: 0 2px 2px 0;
    transform: rotate(40deg);
}

.btn {
    width: 76px;
    height: 23px;
    border-bottom: 2px solid #505154;
    background: #5f6063;
    color: #d2d2d5;
}

.reset {
    margin-top: 10px;
    padding-left: 5px;
    text-align: left;
}

.paths {
    display: flex;
    height: 190px;
    padding: 21px 5px 4px 4px;
    color: #b4b5b8;
}

.paths ul {
    flex: 1;
    background: #26262b;
}

.paths li {
    height: 20px;
    padding-left: 1px;
    border-bottom: 1px solid #1b1b1f;
    line-height: 20px;
}

.path-scroll {
    display: flex;
    flex-direction: column;
    justify-content: space-between;
    width: 16px;
    padding: 6px 4px;
    background: #26262b;
}

.path-scroll .tri {
    border-top-color: #7c7c80;
    border-width: 6px 4px 0;
}

.path-scroll .up {
    border-width: 0 4px 6px;
    border-bottom-color: #7c7c80;
}

.row {
    display: flex;
    gap: 9px;
}

.actions {
    padding-top: 20px;
}

.cool {
    border-color: #48484d;
    background: #545459;
}

.blue {
    width: 65px;
    border-color: #44607b;
    background: #4f7297;
}

.setup {
    width: 85px;
    margin-right: auto;
}

.apply {
    padding-bottom: 1px;
    border: 1px solid #6aa4d4;
    background: #68696c;
}

/* progress window */
.wait {
    position: absolute;
    top: 490px;
    left: 836px;
    width: 390px;
    border-top: 2px solid #3a8fc4;
    background: #37383c;
    box-shadow: 0 2px 8px #0008;
}

.wait-title {
    display: flex;
    align-items: center;
    justify-content: space-between;
    height: 27px;
    padding-left: 6px;
    background: #fff;
    color: #222;
    font-family: "Noto Sans", sans-serif;
}

.wait-title button {
    display: grid;
    place-items: center;
    width: 20px;
    height: 20px;
    background: #c75050;
}

.wait-body {
    display: flex;
    flex-direction: column;
    align-items: flex-end;
    gap: 10px;
    padding: 10px 10px 11px;
}

.wait-box {
    width: 100%;
    height: 80px;
    padding: 10px;
    background: #45464a;
    color: #d8d8da;
}

.wait-box p {
    height: 46px;
    font-size: 12px;
    line-height: 17px;
}

.progress {
    height: 4px;
    background: repeating-linear-gradient(115deg, #2f74b8 0 13px, #4f9ce0 13px 26px);
}

.pointer {
    position: absolute;
    top: 820px;
    left: 1081px;
    width: 14px;
    height: 20px;
}
```
